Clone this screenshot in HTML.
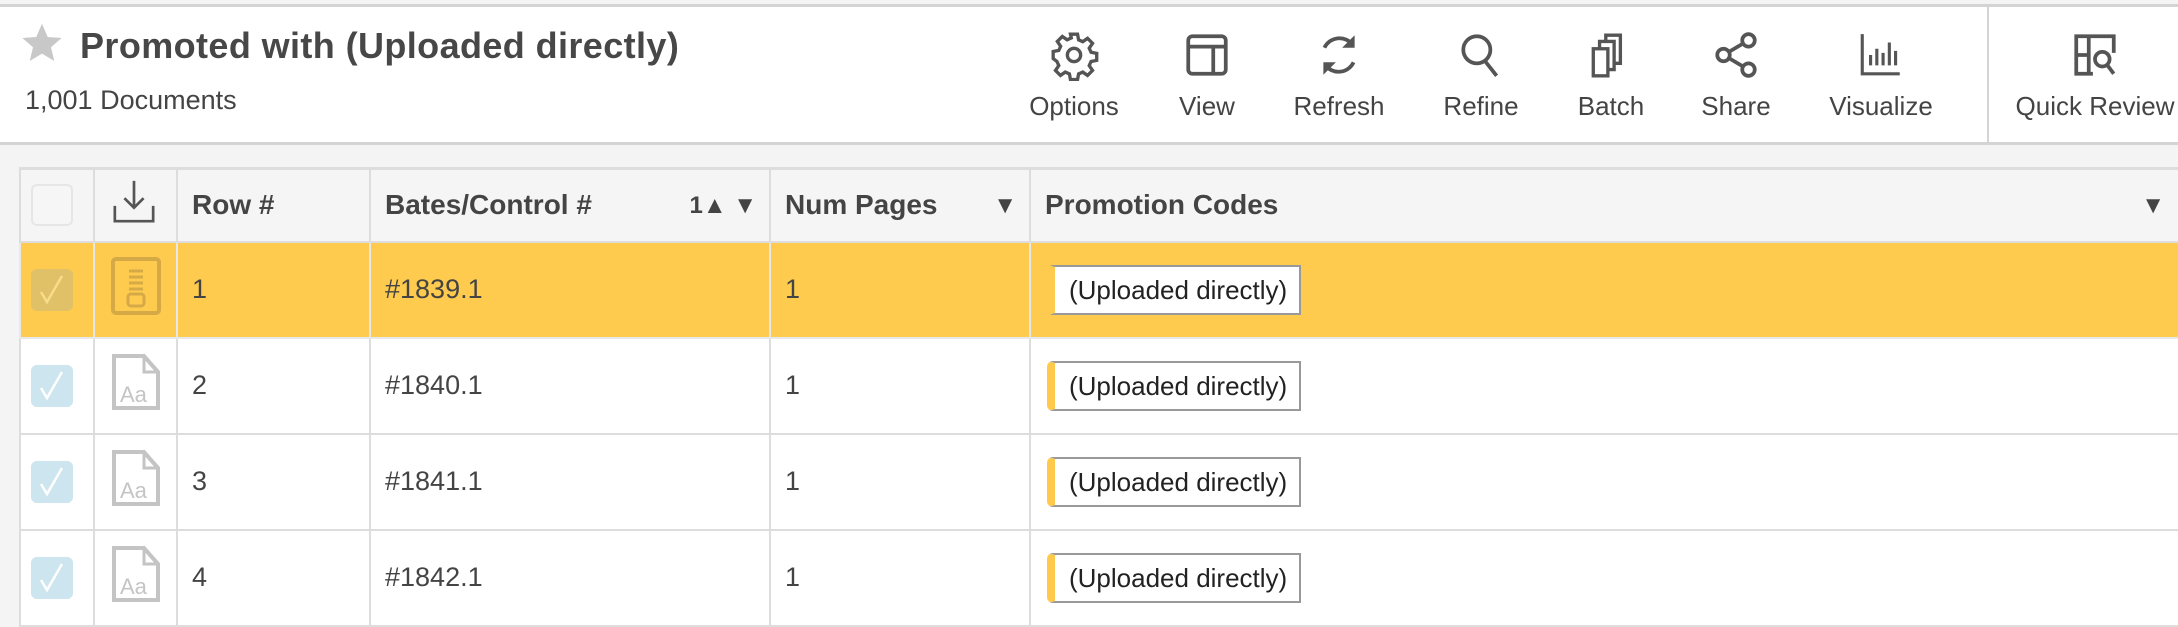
<!DOCTYPE html>
<html><head><meta charset="utf-8"><style>
*{margin:0;padding:0;box-sizing:border-box}
body{width:2178px;height:627px;overflow:hidden;background:#f4f4f4;font-family:"Liberation Sans",sans-serif;color:#444;position:relative}
.hdr{position:absolute;left:0;top:4px;width:2178px;height:141px;background:#fff;border-top:3px solid #d4d4d4;border-bottom:3px solid #d4d4d4}
.abs{position:absolute}
.title{left:80px;top:18px;font-size:36px;font-weight:bold;color:#474747;letter-spacing:0.4px}
.docs{left:25px;top:78px;font-size:27px;color:#444}
.tb{position:absolute;top:22px;width:170px;margin-left:-85px;text-align:center}
.tb svg{display:block;margin:0 auto;width:50px;height:52px}
.tb span{display:block;margin-top:10px;font-size:26px;color:#444;white-space:nowrap}
.sep{left:1987px;top:0;width:2px;height:138px;background:#d4d4d4}
table{position:absolute;left:19px;top:167px;border-collapse:collapse;width:2170px;table-layout:fixed}
td,th{border:2px solid #ddd;height:96px;font-size:27px;text-align:left;padding-left:14px;color:#444;vertical-align:middle;position:relative}
th{height:73px;background:#f5f5f5;font-weight:bold;font-size:28px;border-top:3px solid #ddd}
tr.sel td{background:#fecb4f;border-color:#e8e8e8}
tr.w td{background:#fff}
.cb{width:42px;height:42px;border-radius:6px;background:#cde5ee;margin-left:-4px;position:relative}
.cb.e{background:#f6f6f6;border:2px solid #e6e6e6}
.cb.y{background:#e0c167}
.cb svg{position:absolute;left:8px;top:5px}
.tag{display:inline-block;height:50px;line-height:46px;padding:0 12px 0 14px;border:2px solid #999;border-left:8px solid #fec94c;border-radius:6px 0 0 6px;background:#fff;font-size:26px;color:#222;margin-left:2px}
.arr{position:absolute;right:12px;top:22px;font-size:24px}
</style></head><body>
<div class="hdr">
<svg class="abs" style="left:20px;top:14px" width="44" height="44" viewBox="0 0 24 24"><path fill="#c8c8c8" d="M12 1.5l3.1 7.2 7.6.6-5.8 5 1.8 7.5L12 17.8l-6.7 4 1.8-7.5-5.8-5 7.6-.6z"/></svg>
<div class="abs title">Promoted with (Uploaded directly)</div>
<div class="abs docs">1,001 Documents</div>

<div class="tb" style="left:1074px"><svg viewBox="0 0 24 24" fill="none" stroke="#555" stroke-width="1.6"><circle cx="12" cy="12" r="3.2"/><path d="M10.3 2h3.4l.5 2.7 2 .9 2.3-1.6 2.4 2.4-1.6 2.3.9 2 2.7.5v3.4l-2.7.5-.9 2 1.6 2.3-2.4 2.4-2.3-1.6-2 .9-.5 2.7h-3.4l-.5-2.7-2-.9-2.3 1.6-2.4-2.4 1.6-2.3-.9-2L2 13.7v-3.4l2.7-.5.9-2L4 5.5 6.4 3.1l2.3 1.6 2-.9z"/></svg><span>Options</span></div>
<div class="tb" style="left:1207px"><svg viewBox="0 0 24 24" fill="none" stroke="#555" stroke-width="1.8"><rect x="3" y="3" width="18" height="18" rx="2"/><path d="M3 8h18M15 8v13"/></svg><span>View</span></div>
<div class="tb" style="left:1339px"><svg viewBox="0 0 24 24" fill="none" stroke="#555" stroke-width="1.8"><path d="M18.5 7A8 8 0 0 0 5 8.5M5.5 17A8 8 0 0 0 19 15.5"/><path fill="#555" d="M19.5 2.5v6h-6zM4.5 21.5v-6h6z" stroke="none"/></svg><span>Refresh</span></div>
<div class="tb" style="left:1481px"><svg viewBox="0 0 24 24" fill="none" stroke="#555" stroke-width="1.8"><circle cx="10" cy="9.5" r="6.5"/><path d="M14 15l5.5 7"/></svg><span>Refine</span></div>
<div class="tb" style="left:1611px"><svg viewBox="0 0 24 24" fill="none" stroke="#555" stroke-width="1.6"><rect x="3.5" y="9" width="7" height="13"/><path d="M10.5 19h3V5.5h-7V9M13.5 16h3V2.5h-7v3"/></svg><span>Batch</span></div>
<div class="tb" style="left:1736px"><svg viewBox="0 0 24 24" fill="none" stroke="#555" stroke-width="1.8"><circle cx="18" cy="5" r="3"/><circle cx="6" cy="12" r="3"/><circle cx="18" cy="19" r="3"/><path d="M8.6 10.5l6.8-4M8.6 13.5l6.8 4"/></svg><span>Share</span></div>
<div class="tb" style="left:1881px"><svg viewBox="0 0 24 24" fill="none" stroke="#555" stroke-width="1.5"><path d="M3 2v19h18M7 17v-5M10 17V9M13 17v-6M16 17V6M19 17v-7"/></svg><span>Visualize</span></div>
<div class="abs sep"></div>
<div class="tb" style="left:2095px"><svg viewBox="0 0 24 24" fill="none" stroke="#555" stroke-width="1.8"><path d="M21 11V3H3v18h8M9 3v18M3 12h6"/><circle cx="15.5" cy="14" r="3.5"/><path d="M18 17l3 4"/></svg><span>Quick Review</span></div>
</div>

<table>
<colgroup><col style="width:74px"><col style="width:83px"><col style="width:193px"><col style="width:400px"><col style="width:260px"><col></colgroup>
<tr><th><div class="cb e"></div></th>
<th style="padding-left:16px"><svg width="46" height="48" viewBox="0 0 24 24" fill="none" stroke="#555" stroke-width="1.4"><path d="M12 1v14M7 10l5 5 5-5M2 14v8h20v-8"/></svg></th>
<th>Row #</th>
<th>Bates/Control #<span class="arr" style="right:12px">1▲ ▼</span></th>
<th>Num Pages<span class="arr">▼</span></th>
<th>Promotion Codes<span class="arr" style="right:22px">▼</span></th></tr>
<tr class="sel"><td><div class="cb y"><svg width="26" height="32" viewBox="0 0 26 32"><path d="M2 18l6 10L23 2" fill="none" stroke="#f7dc8a" stroke-width="2.5"/></svg></div></td>
<td style="padding-left:16px"><svg width="50" height="58" viewBox="0 0 50 58"><rect x="2" y="2" width="46" height="54" rx="3" fill="none" stroke="#d6a947" stroke-width="4"/><path d="M18 14h14M18 20h14M18 26h14M18 32h14" stroke="#d6a947" stroke-width="3"/><rect x="17" y="37" width="16" height="12" rx="3" fill="none" stroke="#d6a947" stroke-width="3"/></svg></td>
<td>1</td><td>#1839.1</td><td>1</td><td><span class="tag" style="border-left-color:#fecb4f">(Uploaded directly)</span></td></tr>
<tr class="w"><td><div class="cb"><svg width="26" height="32" viewBox="0 0 26 32"><path d="M2 18l6 10L23 2" fill="none" stroke="#fff" stroke-width="2.5"/></svg></div></td>
<td style="padding-left:16px"><svg width="50" height="58" viewBox="0 0 50 58"><path d="M3 3h30l14 16v36H3z" fill="none" stroke="#c4c4c4" stroke-width="4"/><path d="M33 3v16h14" fill="none" stroke="#c4c4c4" stroke-width="3"/><text x="9" y="49" font-size="22" fill="#c4c4c4" font-family="Liberation Sans">Aa</text></svg></td>
<td>2</td><td>#1840.1</td><td>1</td><td><span class="tag">(Uploaded directly)</span></td></tr>
<tr class="w"><td><div class="cb"><svg width="26" height="32" viewBox="0 0 26 32"><path d="M2 18l6 10L23 2" fill="none" stroke="#fff" stroke-width="2.5"/></svg></div></td>
<td style="padding-left:16px"><svg width="50" height="58" viewBox="0 0 50 58"><path d="M3 3h30l14 16v36H3z" fill="none" stroke="#c4c4c4" stroke-width="4"/><path d="M33 3v16h14" fill="none" stroke="#c4c4c4" stroke-width="3"/><text x="9" y="49" font-size="22" fill="#c4c4c4" font-family="Liberation Sans">Aa</text></svg></td>
<td>3</td><td>#1841.1</td><td>1</td><td><span class="tag">(Uploaded directly)</span></td></tr>
<tr class="w"><td><div class="cb"><svg width="26" height="32" viewBox="0 0 26 32"><path d="M2 18l6 10L23 2" fill="none" stroke="#fff" stroke-width="2.5"/></svg></div></td>
<td style="padding-left:16px"><svg width="50" height="58" viewBox="0 0 50 58"><path d="M3 3h30l14 16v36H3z" fill="none" stroke="#c4c4c4" stroke-width="4"/><path d="M33 3v16h14" fill="none" stroke="#c4c4c4" stroke-width="3"/><text x="9" y="49" font-size="22" fill="#c4c4c4" font-family="Liberation Sans">Aa</text></svg></td>
<td>4</td><td>#1842.1</td><td>1</td><td><span class="tag">(Uploaded directly)</span></td></tr>
</table>
</body></html>
